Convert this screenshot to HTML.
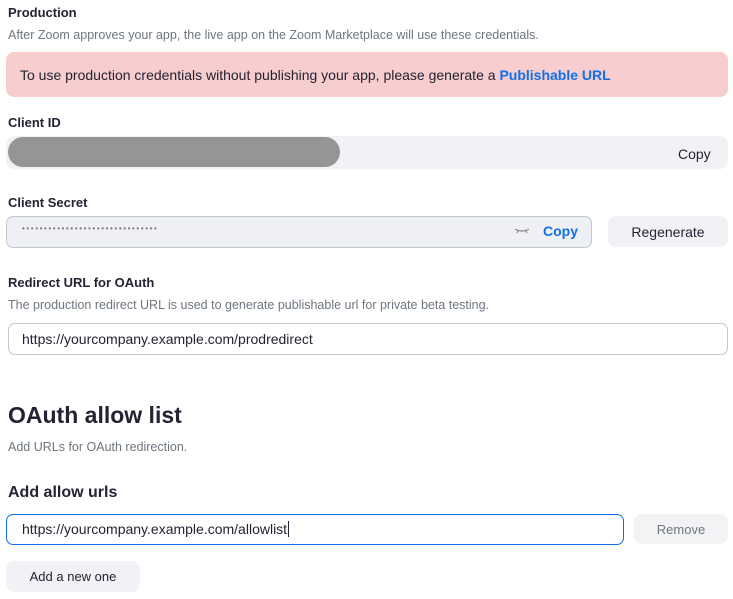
<!DOCTYPE html>
<html><head><style>
body{margin:0;width:733px;height:599px;background:#fff;font-family:"Liberation Sans",sans-serif;color:#232333;position:relative;overflow:hidden}
.a{position:absolute;white-space:nowrap}
.lbl{font-size:13px;font-weight:bold;color:#232333}
.sub{font-size:12.5px;color:#6e7680}
.btn{position:absolute;background:#f1f2f6;border-radius:8px;font-size:14px;display:flex;align-items:center;justify-content:center}
</style></head><body>
<div class="a lbl" style="left:8px;top:5px">Production</div>
<div class="a sub" style="left:8px;top:28px">After Zoom approves your app, the live app on the Zoom Marketplace will use these credentials.</div>
<div class="a" style="left:6px;top:52px;width:722px;height:45px;background:#f7cdcd;border-radius:8px"></div>
<div class="a" style="left:20px;top:67px;font-size:14px">To use production credentials without publishing your app, please generate a <b style="color:#0e71eb">Publishable URL</b></div>
<div class="a lbl" style="left:8px;top:115px">Client ID</div>
<div class="a" style="left:6px;top:136px;width:722px;height:33px;background:#f1f2f6;border-radius:8px"></div>
<div class="a" style="left:8px;top:137px;width:332px;height:30px;background:#959595;border-radius:15px"></div>
<div class="a" style="left:678px;top:146px;font-size:14px">Copy</div>
<div class="a lbl" style="left:8px;top:195px">Client Secret</div>
<div class="a" style="left:6px;top:216px;width:584px;height:30px;background:#eef0f5;border:1px solid #c4c6ce;border-radius:7px"></div>
<div class="a" style="left:22px;top:224px;font-size:8px;color:#777;letter-spacing:1.6px">•••••••••••••••••••••••••••••••</div>
<svg class="a" style="left:514px;top:226px" width="16" height="8"><path d="M1 3 Q8 7 15 3 M4 5 L3 7 M12 5 L13 7" stroke="#888" fill="none" stroke-width="1.2"/></svg>
<div class="a" style="left:543px;top:223px;font-size:14px;font-weight:bold;color:#0e71eb">Copy</div>
<div class="btn" style="left:608px;top:216px;width:120px;height:31px">Regenerate</div>
<div class="a lbl" style="left:8px;top:275px">Redirect URL for OAuth</div>
<div class="a sub" style="left:8px;top:298px">The production redirect URL is used to generate publishable url for private beta testing.</div>
<div class="a" style="left:8px;top:323px;width:718px;height:30px;border:1px solid #c4c6ce;border-radius:7px"></div>
<div class="a" style="left:22px;top:331px;font-size:14px">https://yourcompany.example.com/prodredirect</div>
<div class="a" style="left:8px;top:402px;font-size:23px;font-weight:bold">OAuth allow list</div>
<div class="a sub" style="left:8px;top:440px">Add URLs for OAuth redirection.</div>
<div class="a" style="left:8px;top:484px;font-size:16px;font-weight:bold;color:#232333">Add allow urls</div>
<div class="a" style="left:6px;top:514px;width:616px;height:29px;border:1px solid #0e71eb;border-radius:7px"></div>
<div class="a" style="left:22px;top:521px;font-size:14px">https://yourcompany.example.com/allowlist<span style="border-left:1px solid #232333;margin-left:1px"></span></div>
<div class="btn" style="left:634px;top:514px;width:94px;height:30px;color:#6e7680;font-size:13px;background:#f3f3f6">Remove</div>
<div class="btn" style="left:6px;top:561px;width:134px;height:31px;font-size:13px">Add a new one</div>
</body></html>
